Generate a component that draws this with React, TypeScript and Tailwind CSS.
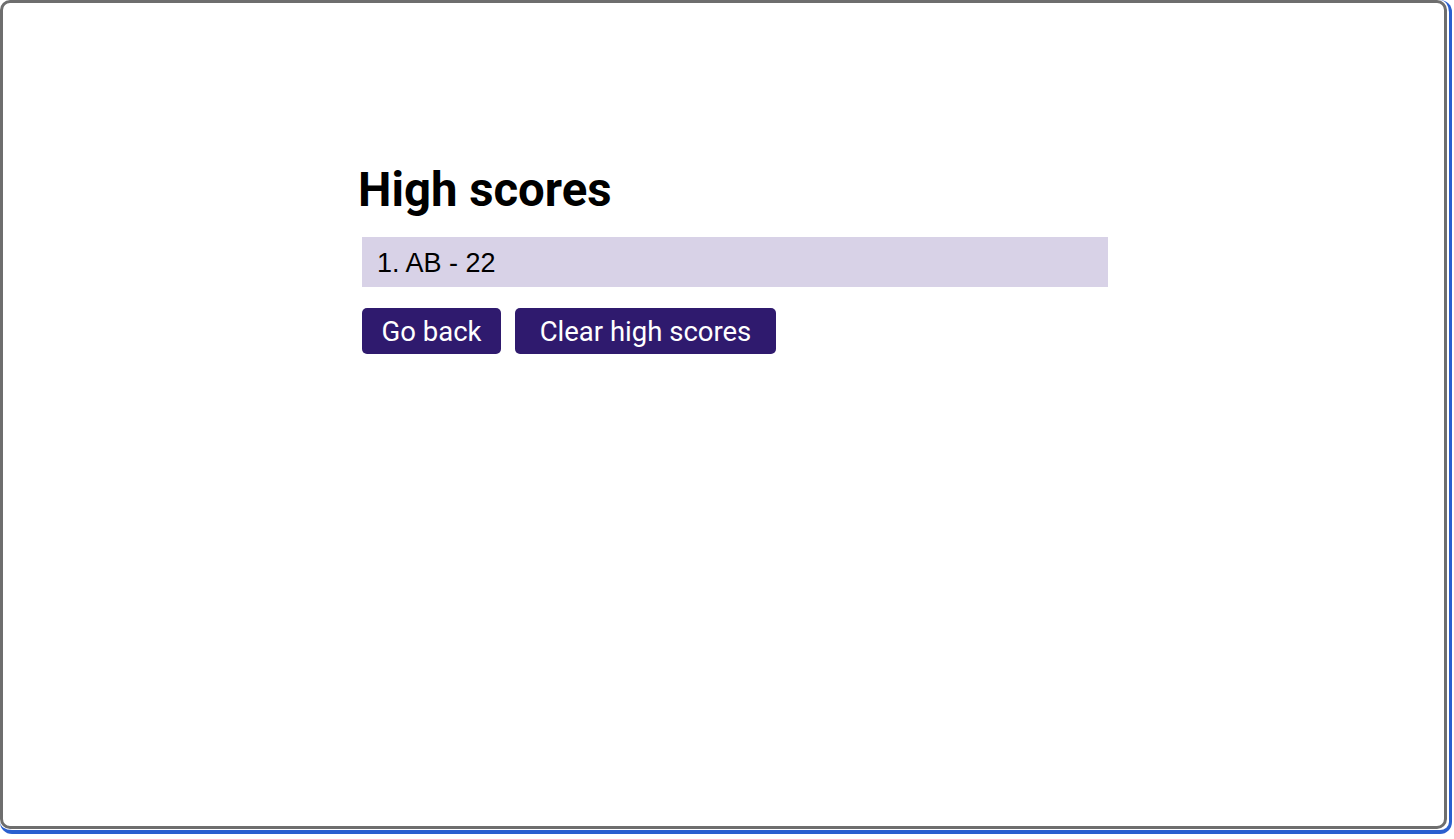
import React from 'react';

const scores = [{ initials: 'AB', score: 22 }];

export default function App() {
  return (
    <div className="w-[1454px] h-[839px] bg-white">
      <div className="w-[1452px] h-[834px] rounded-[12px] border-b-4 border-r-[3px] border-[#2a5fcf] pb-[1px]">
        <div className="w-[1447px] h-full rounded-[10px] border-[3px] border-[#6e6e6e] bg-white pt-[160px] pl-[355px]">
          <h1 className="font-['Roboto',sans-serif] font-bold text-[47.3px] leading-[54px] text-black">High scores</h1>
          <ol className="mt-[20px] ml-[4px] w-[746px]">
            {scores.map((s, i) => (
              <li
                key={i}
                className="h-[50px] flex items-center pl-[15px] pt-[3px] bg-[#d8d2e7] font-['Liberation_Sans',Arial,sans-serif] text-[27px] text-black"
              >
                {i + 1}. {s.initials} - {s.score}
              </li>
            ))}
          </ol>
          <div className="mt-[21px] ml-[4px] flex gap-[14px] font-['Roboto',sans-serif] text-[27.5px] text-white">
            <button className="h-[46px] w-[139px] rounded-[5px] bg-[#2f1a6e] flex items-center justify-center pt-[1px]">Go back</button>
            <button className="h-[46px] w-[261px] rounded-[5px] bg-[#2f1a6e] flex items-center justify-center pt-[1px]">Clear high scores</button>
          </div>
        </div>
      </div>
    </div>
  );
}
